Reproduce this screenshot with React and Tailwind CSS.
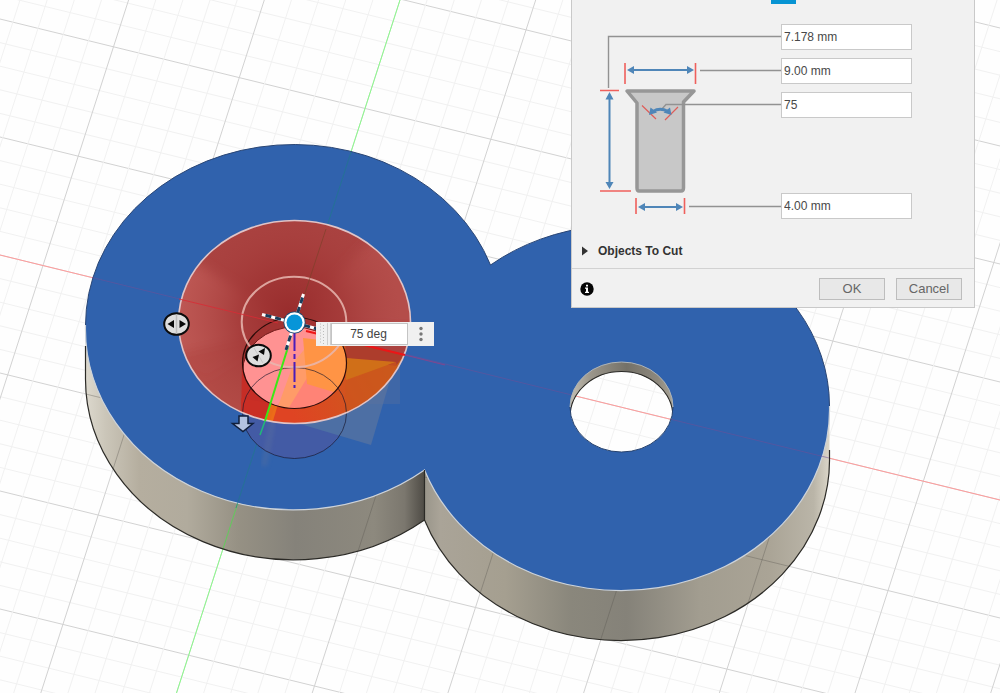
import { useState } from "react";

const steps = (from, to) => Array.from({ length: to - from + 1 }, (_, i) => from + i);

const FACE = "M85.5 325A208.5 181 0 0 1 490.5 265A208.5 181 0 0 1 829.5 406A208.5 181 0 0 1 424.5 470A208.5 181 0 0 1 85.5 325Z";
const RIM_BACK = "M85.5 325A208.5 181 0 0 1 490.5 265A208.5 181 0 0 1 829.5 406";
const RIM_FRONT = "M829.5 406A208.5 181 0 0 1 424.5 470A208.5 181 0 0 1 85.5 325";

function Grid() {
  return (
    <g fill="none">
      {steps(-15, 35).map((k) => (
        <line key={k} x1="0" y1={255 + 23.6 * (k - 5)} x2="1400" y2={598 + 23.6 * (k - 5)}
          stroke={k % 5 === 0 ? "#d2d2d2" : "#f1f1f1"} strokeWidth="1" />
      ))}
      {steps(-15, 50).map((k) => (
        <line key={k} x1={400 + 27.14 * k} y1="0" x2={77.5 + 27.14 * k} y2="1000"
          stroke={k % 5 === 0 ? "#d2d2d2" : "#f1f1f1"} strokeWidth="1" />
      ))}
      <path d="M0 255L1400 598" stroke="#ff9c9c" />
      <path d="M400 0L77.5 1000" stroke="#8bfb8b" />
    </g>
  );
}

function HandleBase({ x, y }) {
  return (
    <>
      <ellipse cx={x} cy={y} rx="12.3" ry="10.8" fill="#dedede" stroke="#0b0b0b" strokeWidth="2" />
    </>
  );
}

function Scene() {
  return (
    <svg className="absolute inset-0 h-full w-full" viewBox="0 0 1000 693" preserveAspectRatio="xMinYMin slice" aria-hidden="true">
      <defs>
        <linearGradient id="wallLeft" gradientUnits="userSpaceOnUse" x1="85" y1="0" x2="425" y2="0">
          <stop offset="0" stopColor="#ddd9ce" />
          <stop offset=".06" stopColor="#cbc6b9" />
          <stop offset=".16" stopColor="#b5ae9f" />
          <stop offset=".3" stopColor="#b1ab9d" />
          <stop offset=".45" stopColor="#969184" />
          <stop offset=".62" stopColor="#85827a" />
          <stop offset=".85" stopColor="#8d897e" />
          <stop offset=".94" stopColor="#7b776e" />
          <stop offset="1" stopColor="#4d4a44" />
        </linearGradient>
        <linearGradient id="wallRight" gradientUnits="userSpaceOnUse" x1="424" y1="0" x2="830" y2="0">
          <stop offset="0" stopColor="#99958a" />
          <stop offset=".04" stopColor="#aaa498" />
          <stop offset=".2" stopColor="#a59f90" />
          <stop offset=".36" stopColor="#8a877c" />
          <stop offset=".5" stopColor="#858279" />
          <stop offset=".68" stopColor="#a29d90" />
          <stop offset=".85" stopColor="#aaa496" />
          <stop offset=".96" stopColor="#bab5a8" />
          <stop offset="1" stopColor="#dcd7ca" />
        </linearGradient>
        <linearGradient id="bore" gradientUnits="userSpaceOnUse" x1="570" y1="0" x2="673" y2="0">
          <stop offset="0" stopColor="#c4bfb3" />
          <stop offset=".2" stopColor="#9b968b" />
          <stop offset=".55" stopColor="#747168" />
          <stop offset=".85" stopColor="#8d887d" />
          <stop offset="1" stopColor="#a9a497" />
        </linearGradient>
        <linearGradient id="sideFade" gradientUnits="userSpaceOnUse" x1="290" y1="410" x2="400" y2="350">
          <stop offset="0" stopColor="#df4423" />
          <stop offset="1" stopColor="#c5641a" />
        </linearGradient>
        <radialGradient id="coreShade" gradientUnits="userSpaceOnUse" cx="290" cy="315" r="110">
          <stop offset="0" stopColor="#982c2c" />
          <stop offset=".45" stopColor="#a13635" stopOpacity=".8" />
          <stop offset="1" stopColor="#a94341" stopOpacity="0" />
        </radialGradient>
        <filter id="soft" x="-30%" y="-30%" width="160%" height="160%"><feGaussianBlur stdDeviation="6" /></filter>
        <filter id="faint" x="-30%" y="-30%" width="160%" height="160%"><feGaussianBlur stdDeviation="2" /></filter>
        <clipPath id="sink"><ellipse cx="294.5" cy="322" rx="116" ry="101.5" /></clipPath>
        <clipPath id="drill"><ellipse cx="294.5" cy="363" rx="52" ry="45.5" /></clipPath>
        <clipPath id="hole"><ellipse cx="621.5" cy="407" rx="51.5" ry="45" /></clipPath>
        <clipPath id="holeFloor"><ellipse cx="621.5" cy="417" rx="51.5" ry="45.5" /></clipPath>
        <clipPath id="walls">
          <path d="M829.5 406V456A208.5 181 0 0 1 424.5 520A208.5 181 0 0 1 85.5 377V325Z" />
        </clipPath>
      </defs>

      <rect width="1400" height="1000" fill="#fefefe" />
      <Grid />

      <g clipPath="url(#walls)">
        <rect x="80" y="320" width="344.5" height="250" fill="url(#wallLeft)" />
        <rect x="424.5" y="380" width="410" height="270" fill="url(#wallRight)" />
        <g stroke="#55534d" strokeOpacity=".35">
          <path d="M264.300 0L30.500 725M128.600 0L-94 693M535.700 0L302 725M671.400 0L448 693M807 0L583.500 693M943 0L719 693M0 373L1000 618" />
          <path d="M400 0L176.500 693" stroke="#54d850" strokeOpacity=".8" />
        </g>
      </g>

      <path d={FACE} fill="#3062ad" />
      <path d={RIM_BACK} fill="none" stroke="#2a4675" />
      <path d={RIM_FRONT} fill="none" stroke="#cdd3da" strokeWidth="1.200" />
      <path d="M829.500 456A208.500 181 0 0 1 424.500 520A208.500 181 0 0 1 85.500 377V346M829.500 456V450M424.500 470V520" fill="none" stroke="#2b2a26" strokeWidth="1.200" />
      <path d="M92 277.500L829 458" stroke="#6f4f98" strokeOpacity=".55" />
      <path d="M351 152L236 508" stroke="#1d7d87" strokeOpacity=".6" />

      <g clipPath="url(#hole)">
        <rect x="565" y="357" width="115" height="100" fill="url(#bore)" />
        <g clipPath="url(#holeFloor)">
          <rect x="565" y="357" width="115" height="100" fill="#fefefe" />
          <Grid />
        </g>
        <ellipse cx="621.500" cy="417" rx="51.500" ry="45.500" fill="none" stroke="#282724" strokeWidth="1.200" />
      </g>
      <path d="M570 407A51.500 45 0 0 1 673 407" fill="none" stroke="#aeb4b8" />
      <path d="M570 407A51.500 45 0 0 0 673 407" fill="none" stroke="#24416f" />

      <ellipse cx="294.500" cy="413" rx="52" ry="45.500" fill="#435ba5" />
      <path d="M395 363L371 445L280 418L320 360Z" fill="#4d6fa4" />
      <path d="M400 360V404H340V360Z" fill="#64759a" opacity=".3" />
      <path d="M273 420L264 466" stroke="#5a6f9f" strokeWidth="6" opacity=".4" filter="url(#faint)" />

      <g clipPath="url(#sink)">
        <rect x="175" y="215" width="240" height="215" fill="#aa4240" />
        <g filter="url(#soft)">
          <path d="M294 325L195 262L170 285V350L205 380Z" fill="#c25c58" opacity=".8" />
          <path d="M294 325L375 235L425 255V330Z" fill="#b6504d" opacity=".8" />
          <path d="M280 330L170 355L205 415L265 432Z" fill="#b44b47" opacity=".9" />
        </g>
        <ellipse cx="290" cy="315" rx="110" ry="100" fill="url(#coreShade)" />
        <path d="M242 363L241 430H345L346 363Z" fill="#c62d26" />
        <path d="M300 332L405 355L425 405L372 450L260 440L278 400Z" fill="url(#sideFade)" />
        <path d="M345 340L405 354L396 366L346 358Z" fill="#ad3d2c" />
        <path d="M346 358L396 362L346 380Z" fill="#d06f18" />
        <path d="M346 381L396 362L405 400L345 424Z" fill="#cc561d" opacity=".7" />
        <path d="M241 398L275 404L268 430H241Z" fill="#cb2f26" opacity=".75" />
        <path d="M275 402L266 432" stroke="#ef7417" strokeWidth="7" opacity=".85" />
      </g>

      <ellipse cx="294.500" cy="363" rx="52" ry="45.500" fill="#a23332" />
      <g clipPath="url(#drill)">
        <ellipse cx="294.500" cy="372" rx="52" ry="45" fill="#ff9292" stroke="#701919" />
        <path d="M294 385L272 412H320L348 400V380L307 376Z" fill="#ff8376" />
        <path d="M294 362L276 412L285 414L307 378V346Z" fill="#ff9b68" />
        <path d="M303 338L347 343V396L307 384Z" fill="#ff9445" />
      </g>
      <ellipse cx="294.500" cy="363" rx="52" ry="45.500" fill="none" stroke="#2d0c0a" strokeWidth="1.200" />
      <ellipse cx="294.500" cy="413" rx="52" ry="45.500" fill="none" stroke="#17152b" strokeOpacity=".65" />
      <ellipse cx="294.500" cy="322" rx="116" ry="101.500" fill="none" stroke="#e0c4c7" strokeWidth="1.600" />
      <ellipse cx="294" cy="322" rx="52.300" ry="45.300" fill="none" stroke="#e8b7b0" strokeWidth="2" opacity=".85" />
      <path d="M179 299L278 323" stroke="#d92a35" strokeOpacity=".8" />
      <path d="M326 229L304 296" stroke="#784127" opacity=".6" />
      <path d="M306 331L405 355" stroke="#ed1517" strokeWidth="2" />
      <path d="M405 355L445 365" stroke="#a43b81" strokeOpacity=".7" />
      <path d="M288 347L265 421" stroke="#3be915" strokeWidth="2" />
      <path d="M265 421L260 435" stroke="#20b979" strokeWidth="1.500" />
      <path d="M294.500 331V388" stroke="#4b1cba" strokeWidth="2" strokeDasharray="20 3 5 3" />
      <g fill="none" strokeWidth="3">
        <path d="M262 314.500L318 329M303.500 294L286 350" stroke="#fff" />
        <path d="M265.500 315.300L318 329M302.500 297.500L286 350" stroke="#193d5b" strokeDasharray="6 4" />
      </g>
      <circle cx="294.500" cy="322.500" r="11" fill="#184b74" />
      <circle cx="294.500" cy="322.500" r="10.200" fill="#fff" />
      <circle cx="294.500" cy="322.500" r="8" fill="#0795d8" />
      <HandleBase x="176.500" y="324" />
      <path d="M176.500 314.500V333.500" stroke="#bdbdbd" strokeWidth="1.500" />
      <path d="M167.500 324L174 320V328ZM186 324L179.500 320V328Z" fill="#080808" />
      <HandleBase x="258.500" y="355.500" />
      <path d="M254 348L263 363" stroke="#c6c6c6" />
      <path d="M252.500 357L259 354.500L257.500 361.500ZM258.500 351.500L265 348L264 355Z" fill="#080808" />
      <path d="M239 416H248V423.500H253L243 431.500L232.500 423.500H239Z" fill="#b4c3e2" stroke="#11203d" strokeWidth="1.500" />
    </svg>
  );
}

function HoleDiagram() {
  return (
    <svg className="h-[234px] w-[210px] shrink-0" viewBox="572 0 210 234" fill="none" role="img" aria-label="Countersink hole dimensions">
      <path d="M627 91H694L683.500 102V188Q683.500 191 681 191H639Q637 191 637 188V103Z" fill="#c8c8c8" stroke="#979797" strokeWidth="3.500" strokeLinejoin="round" />
      <path d="M608.500 88V36.500H782M700 70.500H782M661 110L666 104.500H782M689 206.500H782" stroke="#929292" strokeWidth="1.400" />
      <path d="M625 63V84M695.500 63V84M600 90.500H619M600 191H631M636 198V214M684.500 198V214" stroke="#ef605c" strokeWidth="1.600" />
      <path d="M642 105.500L656 119M678 107L665 120" stroke="#df5d59" strokeWidth="1.200" />
      <g fill="#4f86b8">
        <path d="M631 69H690V71H631ZM642 206H680V208H642ZM608.500 97H610.500V185H608.500Z" />
        <path d="M627 70L634 66V74ZM694 70L687 66V74ZM638 207L645 203V211ZM683 207L676 203V211ZM609.500 92L613.500 99.500H605.500ZM609.500 189L613.500 182H605.500Z" />
        <path d="M649 115L650.500 107.500L657 112.500ZM671.500 115L670 107.500L663.500 112.500Z" />
      </g>
      <path d="M653 111.500Q660 107 668 111.500" stroke="#4f86b8" strokeWidth="2.800" />
    </svg>
  );
}

function DimensionInput({ label, initial }) {
  const [value, setValue] = useState(initial);
  return (
    <input aria-label={label} value={value} onChange={(e) => setValue(e.target.value)}
      className="h-[26px] w-full border border-[#c9c9c9] bg-white px-0.5 text-xs text-[#484848] outline-none" />
  );
}

function HolePanel() {
  return (
    <section aria-label="Hole" className="relative z-10 mr-[25px] ml-auto w-[404px] border-x border-b border-[#c9c9c9] bg-[#f1f1f1]">
      <div className="absolute top-0 left-[199px] h-1 w-[25px] bg-[#0794d3]" />
      <div className="flex h-[234px]">
        <HoleDiagram />
        <div className="-ml-px flex w-[131px] flex-col gap-2 pt-6">
          <DimensionInput label="Hole depth" initial="7.178 mm" />
          <DimensionInput label="Countersink diameter" initial="9.00 mm" />
          <DimensionInput label="Countersink angle" initial="75" />
          <div className="mt-auto pb-[15px]">
            <DimensionInput label="Hole diameter" initial="4.00 mm" />
          </div>
        </div>
      </div>
      <button type="button" aria-expanded="false" className="flex h-[34px] w-full items-center gap-2.5 px-2.5 text-xs font-bold text-[#333]">
        <svg className="h-2.5 w-1.5" viewBox="0 0 6 10" aria-hidden="true"><path d="M0 .5L6 5L0 9.500Z" fill="#333" /></svg>
        Objects To Cut
      </button>
      <footer className="flex items-center gap-[11px] border-t border-[#d2d2d2] pt-[9px] pr-3 pb-[7px] pl-2">
        <button type="button" aria-label="Information" className="mr-auto">
          <svg className="size-3.5" viewBox="0 0 14 14" aria-hidden="true">
            <circle cx="7" cy="7" r="6.700" fill="#050505" />
            <path d="M5 5.500H8V9.700H9V11H5V9.700H6V6.800H5ZM6 2.800H8V4.500H6Z" fill="#fff" />
          </svg>
        </button>
        <button type="button" className="h-[22px] w-[66px] border border-[#bdbdbd] bg-[#e8e8e8] text-[13px] leading-5 text-[#666]">OK</button>
        <button type="button" className="h-[22px] w-[66px] border border-[#bdbdbd] bg-[#e8e8e8] text-[13px] leading-5 text-[#666]">Cancel</button>
      </footer>
    </section>
  );
}

function AngleInput() {
  const [angle, setAngle] = useState("75 deg");
  return (
    <div className="absolute top-[322px] left-[316px] flex h-6 w-[118px] items-center bg-[#f0f0f0]">
      <svg className="h-6 w-[15px]" viewBox="0 0 15 24" aria-hidden="true">
        {steps(0, 6).map((i) => (
          <path key={i} d={`M4 ${2 + i * 3}h1M7 ${3.5 + i * 3}h1`} stroke="#bcbcbc" />
        ))}
        <path d="M11.500 1V23M14.500 1V23" stroke="#cecece" />
      </svg>
      <input aria-label="Angle" value={angle} onChange={(e) => setAngle(e.target.value)}
        className="h-[22px] w-[77px] border border-[#c4c4c4] bg-white pr-0.5 text-center text-xs text-[#444] outline-none" />
      <button type="button" aria-label="More options" className="flex h-full flex-1 items-center justify-center">
        <svg className="h-4 w-1" viewBox="0 0 4 16" fill="#777" aria-hidden="true">
          <circle cx="2" cy="2.500" r="1.700" /><circle cx="2" cy="8" r="1.700" /><circle cx="2" cy="13.500" r="1.700" />
        </svg>
      </button>
    </div>
  );
}

export default function App() {
  return (
    <main className="relative min-h-screen overflow-hidden bg-white font-['Liberation_Sans',Arial,sans-serif]">
      <Scene />
      <HolePanel />
      <AngleInput />
    </main>
  );
}
